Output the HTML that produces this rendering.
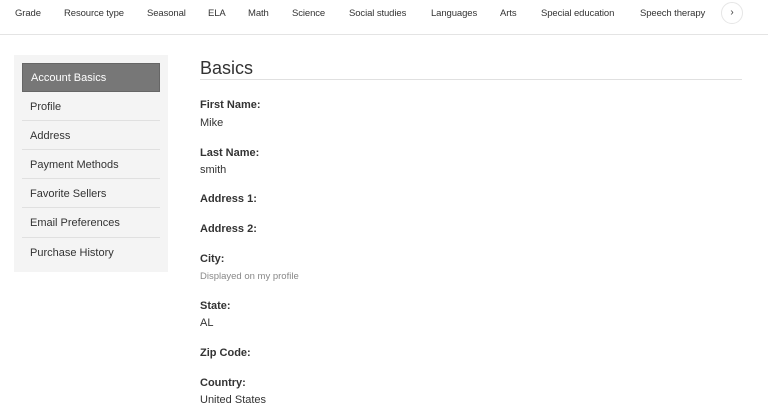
<!DOCTYPE html>
<html><head><style>
*{margin:0;padding:0;box-sizing:border-box}
body{width:768px;height:411px;overflow:hidden;background:#fff;font-family:"Liberation Sans",sans-serif;color:#2b2b2b;position:relative}
.nav{position:absolute;top:0;left:0;width:768px;height:35px;border-bottom:1px solid #e4e4e4}
.nav span{position:absolute;top:8px;font-size:9.5px;color:#333;letter-spacing:-0.1px}
.chev{position:absolute;left:721px;top:2px;width:22px;height:22px;border:1px solid #e6e6e6;border-radius:50%;font-size:10px;text-align:center;line-height:20px;color:#333}
.side{position:absolute;left:14px;top:55px;width:154px;height:217px;background:#f4f4f4}
.act{position:absolute;left:8px;top:8px;width:138px;height:29px;background:#777;border:1px solid #666;color:#fff;font-size:11px;line-height:29px;padding-left:8px}
.it{position:absolute;left:8px;width:138px;height:29px;font-size:11px;line-height:31px;padding-left:8px;color:#333;border-top:1px solid #e0e0e0}
h1{position:absolute;left:200px;top:58px;font-size:18px;font-weight:normal;color:#333}
.hr{position:absolute;left:200px;top:79px;width:542px;height:1px;background:#e0e0e0}
.l{position:absolute;left:200px;font-size:11px;font-weight:bold;color:#333}
.v{position:absolute;left:200px;font-size:11px;color:#333}
.s{position:absolute;left:200px;font-size:9.5px;color:#888}
</style></head><body>
<div class="nav">
<span style="left:15px">Grade</span><span style="left:64px">Resource type</span><span style="left:147px">Seasonal</span><span style="left:208px">ELA</span><span style="left:248px">Math</span><span style="left:292px">Science</span><span style="left:349px">Social studies</span><span style="left:431px">Languages</span><span style="left:500px">Arts</span><span style="left:541px">Special education</span><span style="left:640px">Speech therapy</span>
<div class="chev">&rsaquo;</div>
</div>
<div class="side">
<div class="act">Account Basics</div>
<div class="it" style="top:37px;border-top:none">Profile</div>
<div class="it" style="top:65px">Address</div>
<div class="it" style="top:94px">Payment Methods</div>
<div class="it" style="top:123px">Favorite Sellers</div>
<div class="it" style="top:152px">Email Preferences</div>
<div class="it" style="top:182px">Purchase History</div>
</div>
<h1>Basics</h1><div class="hr"></div>
<div class="l" style="top:99px">First Name:</div><div class="v" style="top:117px">Mike</div>
<div class="l" style="top:147px">Last Name:</div><div class="v" style="top:164px">smith</div>
<div class="l" style="top:193px">Address 1:</div>
<div class="l" style="top:223px">Address 2:</div>
<div class="l" style="top:253px">City:</div><div class="s" style="top:271px">Displayed on my profile</div>
<div class="l" style="top:300px">State:</div><div class="v" style="top:317px">AL</div>
<div class="l" style="top:347px">Zip Code:</div>
<div class="l" style="top:377px">Country:</div><div class="v" style="top:394px">United States</div>
</body></html>
